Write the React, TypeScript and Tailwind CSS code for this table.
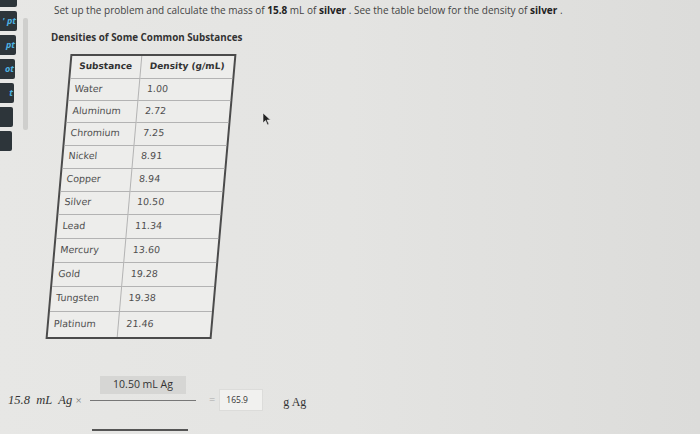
import React from "react";

interface Row {
  name: string;
  density: string;
  h: number;
}

const rows: Row[] = [
  { name: "Water", density: "1.00", h: 22 },
  { name: "Aluminum", density: "2.72", h: 22 },
  { name: "Chromium", density: "7.25", h: 23 },
  { name: "Nickel", density: "8.91", h: 23 },
  { name: "Copper", density: "8.94", h: 23 },
  { name: "Silver", density: "10.50", h: 23 },
  { name: "Lead", density: "11.34", h: 24 },
  { name: "Mercury", density: "13.60", h: 24 },
  { name: "Gold", density: "19.28", h: 24 },
  { name: "Tungsten", density: "19.38", h: 25 },
  { name: "Platinum", density: "21.46", h: 26 },
];

const tabs = [
  { label: "' pt", w: "w-[17px]" },
  { label: "pt", w: "w-[16px]" },
  { label: "ot", w: "w-[15px]" },
  { label: "t", w: "w-[14px]" },
  { label: "", w: "w-[13px]" },
  { label: "", w: "w-[12px]" },
];

const Sidebar: React.FC = () => {
  return (
    <div className="flex shrink-0 items-start">
      <div className="flex flex-col gap-[4px]">
        <div className="h-[7px] w-[17px] rounded-br-[2px] bg-[#2d353a]" />
        {tabs.map((tab, i) => (
          <div
            key={i}
            className={`${tab.w} flex h-[20px] items-center justify-end overflow-hidden rounded-r-[2px] bg-[#2d353a] pr-[1px]`}
          >
            <span className="whitespace-nowrap text-[9px] font-bold italic text-[#4fb3e3] [font-family:'Open_Sans',sans-serif]">
              {tab.label}
            </span>
          </div>
        ))}
      </div>
      <div className="ml-[6px] mt-[18px] h-[112px] w-[5px] rounded-[2px] bg-[#cfcfcd]" />
    </div>
  );
};

const DensityTable: React.FC = () => {
  return (
    <div className="ml-[4px] mt-[9px] w-[166px] -skew-x-[5deg] border-2 border-[#4b4b4b] bg-[#ededeb]">
      <table className="w-full border-collapse [font-family:'DejaVu_Sans',sans-serif]">
        <thead>
          <tr className="h-[22px]">
            <th className="w-[69px] border-b border-r border-[#b3b3b3] text-center text-[9px] font-bold text-[#333]">
              Substance
            </th>
            <th className="border-b border-[#b3b3b3] text-center text-[9px] font-bold text-[#333]">
              Density (g/mL)
            </th>
          </tr>
        </thead>
        <tbody>
          {rows.map((row, i) => (
            <tr key={row.name} style={{ height: row.h }}>
              <td
                className={`border-r border-[#b3b3b3] pl-[5px] text-left text-[9.5px] text-[#4f4f4f] ${
                  i < rows.length - 1 ? "border-b" : ""
                }`}
              >
                {row.name}
              </td>
              <td
                className={`border-[#b3b3b3] pl-[8px] text-left text-[9.5px] text-[#4f4f4f] ${
                  i < rows.length - 1 ? "border-b" : ""
                }`}
              >
                {row.density}
              </td>
            </tr>
          ))}
        </tbody>
      </table>
    </div>
  );
};

const Equation: React.FC = () => {
  return (
    <div className="mt-[37px] flex items-start pl-[8px]">
      <div className="mt-[17px] w-[82px] whitespace-nowrap text-[12.5px] leading-[14px] italic text-[#333] [font-family:'Liberation_Serif',serif]">
        15.8&nbsp;&nbsp;mL&nbsp;&nbsp;Ag <span className="not-italic text-[11px] text-[#777]">×</span>
      </div>
      <div className="flex w-[106px] flex-col">
        <div className="mx-[10px] flex h-[18px] items-center justify-center bg-[#d6d6d4] text-[10.5px] text-[#333] [font-family:'Open_Sans',sans-serif]">
          10.50 mL Ag
        </div>
        <div className="mt-[6px] h-[1px] w-full bg-[#777]" />
        <div className="ml-[2px] mt-[28px] h-[2px] w-[96px] bg-[#555]" />
      </div>
      <div className="ml-[13px] mt-[16px] text-[11px] leading-[14px] text-[#aaa] [font-family:'Open_Sans',sans-serif]">
        =
      </div>
      <div className="ml-[4px] mt-[13px] flex h-[22px] w-[44px] items-center border border-[#dcdcda] bg-[#f1f1ef] pl-[6px] text-[8.5px] text-[#333] [font-family:'Open_Sans',sans-serif]">
        165.9
      </div>
      <div className="ml-[20px] mt-[19px] text-[12px] leading-[14px] text-[#333] [font-family:'Liberation_Serif',serif]">
        g Ag
      </div>
    </div>
  );
};

const App: React.FC = () => {
  return (
    <div className="relative h-[434px] w-[700px] overflow-hidden bg-gradient-to-r from-[#e7e7e5] via-[#e4e4e2] to-[#dcdcda]">
      <div className="flex items-start">
        <Sidebar />
        <div className="ml-[26px] flex flex-col">
          <p className="mt-[3px] whitespace-nowrap text-[10px] leading-[14px] text-[#444] [font-family:'Open_Sans',sans-serif]">
            Set up the problem and calculate the mass of <b className="font-bold text-[#222]">15.8</b> mL of{" "}
            <b className="font-bold text-[#222]">silver</b> . See the table below for the density of{" "}
            <b className="font-bold text-[#222]">silver</b> .
          </p>
          <h3 className="-ml-[3px] mt-[14px] text-[9.8px] leading-[14px] font-bold text-[#333] [font-family:'Open_Sans',sans-serif]">
            Densities of Some Common Substances
          </h3>
          <DensityTable />
        </div>
      </div>
      <Equation />

      {/* mouse pointer */}
      <svg className="absolute left-[262px] top-[112px]" width="12" height="14" viewBox="0 0 12 14">
        <path d="M1 1 L1 11 L3.5 8.5 L5.5 13 L7 12.3 L5 8 L8.5 8 Z" fill="#222" stroke="#eee" strokeWidth="0.6" />
      </svg>
    </div>
  );
};

export default App;
